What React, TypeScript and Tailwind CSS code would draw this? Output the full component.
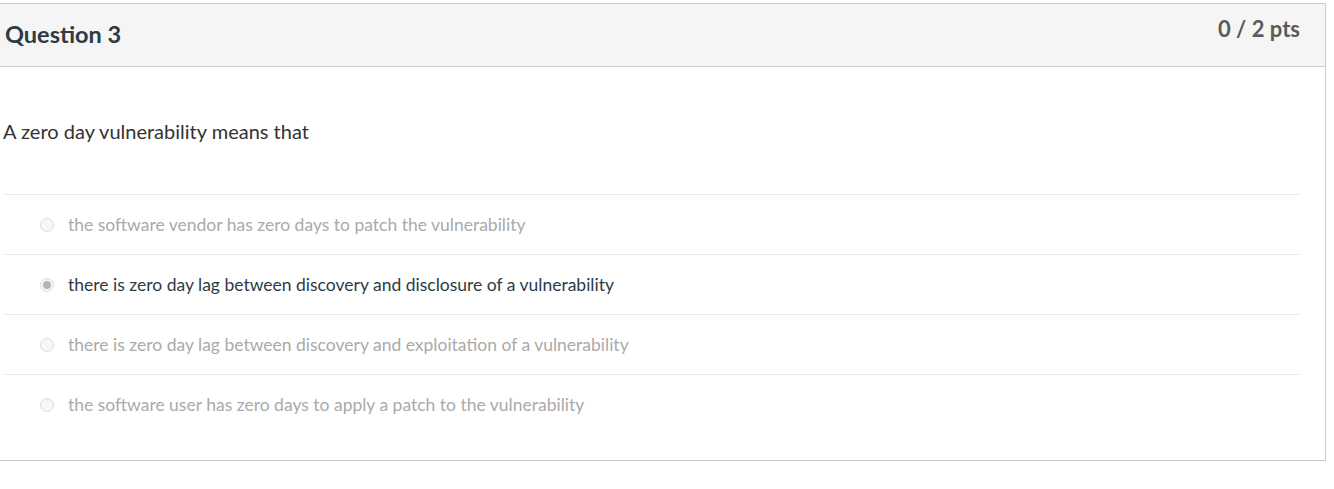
import React from "react";

const options = [
  { text: "the software vendor has zero days to patch the vulnerability", selected: false },
  { text: "there is zero day lag between discovery and disclosure of a vulnerability", selected: true },
  { text: "there is zero day lag between discovery and exploitation of a vulnerability", selected: false },
  { text: "the software user has zero days to apply a patch to the vulnerability", selected: false },
];

function Radio({ selected }: { selected: boolean }) {
  return (
    <span className="w-[14px] h-[14px] rounded-full border border-[#dcdcdc] bg-[#f7f7f7] flex items-center justify-center shrink-0">
      {selected && <span className="w-[8px] h-[8px] rounded-full bg-[#b4b4b4]" />}
    </span>
  );
}

export default function App() {
  return (
    <div className="min-h-screen bg-white pt-[3px] font-['Lato',sans-serif]">
      <div className="w-[1326px] border-t border-r border-b border-[#c7cdd1] bg-white">
        <div className="h-[63px] bg-[#f5f5f5] border-b border-[#c7cdd1] flex justify-between items-start pl-[5px] pr-[25px]">
          <h2 className="mt-[16px] text-[23.5px] leading-[1.2] font-bold text-[#2d3b45]">Question 3</h2>
          <div className="mt-[12px] text-[22px] leading-[1.2] font-bold text-[#5b5b5b]">0 / 2 pts</div>
        </div>
        <div className="pl-[3px] pr-[25px] pt-[52px] pb-[26px]">
          <p className="text-[20px] leading-[1.2] text-[#333] mb-[51px]">A zero day vulnerability means that</p>
          <div>
            {options.map((o) => (
              <div key={o.text} className="h-[60px] border-t border-[#ececec] flex items-center pl-[37px] gap-[14px]">
                <Radio selected={o.selected} />
                <span className={"text-[17.5px] leading-[1.2] " + (o.selected ? "text-[#2d3b45]" : "text-[#aaaaaa]")}>
                  {o.text}
                </span>
              </div>
            ))}
          </div>
        </div>
      </div>
    </div>
  );
}
